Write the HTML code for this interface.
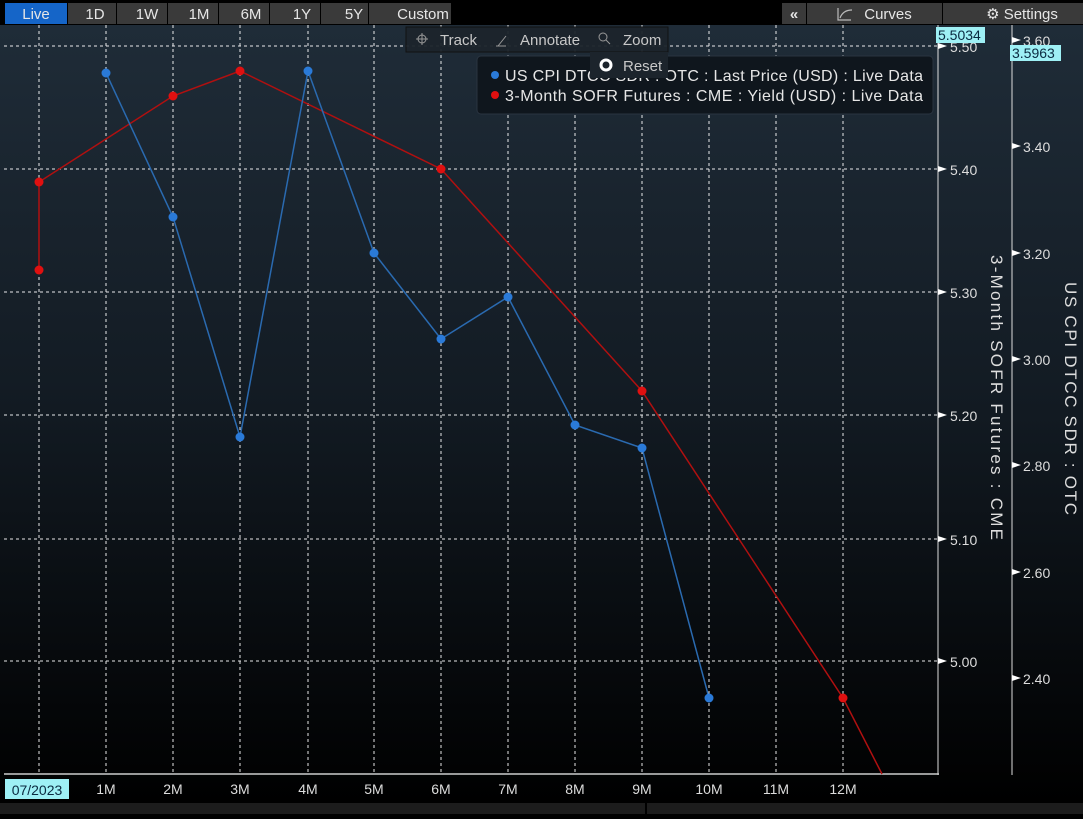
<!DOCTYPE html>
<html><head><meta charset="utf-8"><style>
body{margin:0;width:1083px;height:814px;overflow:hidden;background:#000;font-family:"Liberation Sans",sans-serif;}
svg text{font-family:"Liberation Sans",sans-serif;}
</style></head><body>
<svg width="1083" height="814" xmlns="http://www.w3.org/2000/svg">
<defs>
<linearGradient id="bg" x1="0" y1="0" x2="0" y2="1">
<stop offset="0" stop-color="#1f2c38"/><stop offset="0.5" stop-color="#121a22"/><stop offset="1" stop-color="#000"/>
</linearGradient>
</defs>
<rect x="0" y="0" width="1083" height="814" fill="#000"/>
<rect x="0" y="25" width="1083" height="778" fill="url(#bg)"/>
<rect x="0" y="0" width="1083" height="25" fill="#000"/>
<rect x="5" y="3" width="62" height="21" fill="#1565c8"/>
<g fill="#3a3a3a">
<rect x="68" y="3" width="48" height="21"/><rect x="117" y="3" width="50" height="21"/><rect x="168" y="3" width="50" height="21"/>
<rect x="219" y="3" width="50" height="21"/><rect x="270" y="3" width="50" height="21"/><rect x="321" y="3" width="47" height="21"/><rect x="369" y="3" width="82" height="21"/>
<rect x="782" y="3" width="24" height="21"/><rect x="807" y="3" width="135" height="21"/><rect x="943" y="3" width="140" height="21"/>
</g>
<g fill="#e6e6e6" font-size="15" text-anchor="middle">
<text x="36" y="19">Live</text><text x="95" y="19">1D</text><text x="147" y="19">1W</text><text x="199" y="19">1M</text>
<text x="251" y="19">6M</text><text x="302" y="19">1Y</text><text x="354" y="19">5Y</text><text x="423" y="19">Custom</text>
<text x="794" y="19" font-weight="bold">«</text><text x="888" y="19">Curves</text><text x="1022" y="19">⚙ Settings</text>
</g>
<path d="M838 8 v12 h13 M840 18 q3-8 12-8" stroke="#bbb" fill="none" stroke-width="1.2"/>
<g stroke="#fff" stroke-width="1" stroke-dasharray="3,3" opacity="0.9">
<line x1="39" y1="25" x2="39" y2="774"/><line x1="106" y1="25" x2="106" y2="774"/><line x1="173" y1="25" x2="173" y2="774"/>
<line x1="240" y1="25" x2="240" y2="774"/><line x1="308" y1="25" x2="308" y2="774"/><line x1="374" y1="25" x2="374" y2="774"/>
<line x1="441" y1="25" x2="441" y2="774"/><line x1="508" y1="25" x2="508" y2="774"/><line x1="575" y1="25" x2="575" y2="774"/>
<line x1="642" y1="25" x2="642" y2="774"/><line x1="709" y1="25" x2="709" y2="774"/><line x1="776" y1="25" x2="776" y2="774"/>
<line x1="843" y1="25" x2="843" y2="774"/>
<line x1="4" y1="46" x2="938" y2="46"/><line x1="4" y1="169" x2="938" y2="169"/><line x1="4" y1="292" x2="938" y2="292"/>
<line x1="4" y1="415" x2="938" y2="415"/><line x1="4" y1="539" x2="938" y2="539"/><line x1="4" y1="661" x2="938" y2="661"/>
</g>
<line x1="938" y1="25" x2="938" y2="775" stroke="#ddd"/>
<line x1="1012" y1="25" x2="1012" y2="775" stroke="#ddd"/>
<line x1="4" y1="774" x2="939" y2="774" stroke="#ccc" stroke-width="1.5"/>
<g fill="#fff">
<path d="M938 43 l9 3 l-9 3z"/><path d="M938 166 l9 3 l-9 3z"/><path d="M938 289 l9 3 l-9 3z"/><path d="M938 412 l9 3 l-9 3z"/><path d="M938 536 l9 3 l-9 3z"/><path d="M938 658 l9 3 l-9 3z"/>
<path d="M1012 37 l9 3 l-9 3z"/><path d="M1012 143 l9 3 l-9 3z"/><path d="M1012 250 l9 3 l-9 3z"/><path d="M1012 356 l9 3 l-9 3z"/><path d="M1012 462 l9 3 l-9 3z"/><path d="M1012 569 l9 3 l-9 3z"/><path d="M1012 675 l9 3 l-9 3z"/>
</g>
<g fill="#ddd" font-size="14">
<text x="950" y="52">5.50</text><text x="950" y="175">5.40</text><text x="950" y="298">5.30</text><text x="950" y="421">5.20</text><text x="950" y="545">5.10</text><text x="950" y="667">5.00</text>
<text x="1023" y="46">3.60</text><text x="1023" y="152">3.40</text><text x="1023" y="259">3.20</text><text x="1023" y="365">3.00</text><text x="1023" y="471">2.80</text><text x="1023" y="578">2.60</text><text x="1023" y="684">2.40</text>
</g>
<rect x="936" y="27" width="49" height="16" fill="#9ef0f5"/><text x="938" y="40" font-size="14" fill="#0a2a40">5.5034</text>
<rect x="1010" y="45" width="51" height="16" fill="#9ef0f5"/><text x="1012" y="58" font-size="14" fill="#0a2a40">3.5963</text>
<text transform="translate(991,255) rotate(90)" font-size="17" fill="#ddd" textLength="285" lengthAdjust="spacing">3-Month SOFR Futures : CME</text>
<text transform="translate(1065,282) rotate(90)" font-size="17" fill="#ddd" textLength="233" lengthAdjust="spacing">US CPI DTCC SDR : OTC</text>
<rect x="5" y="779" width="64" height="20" fill="#9ef0f5"/>
<g fill="#ddd" font-size="14" text-anchor="middle">
<text x="37" y="795" fill="#0a2a40">07/2023</text>
<text x="106" y="794">1M</text><text x="173" y="794">2M</text><text x="240" y="794">3M</text><text x="308" y="794">4M</text><text x="374" y="794">5M</text>
<text x="441" y="794">6M</text><text x="508" y="794">7M</text><text x="575" y="794">8M</text><text x="642" y="794">9M</text><text x="709" y="794">10M</text>
<text x="776" y="794">11M</text><text x="843" y="794">12M</text>
</g>
<rect x="0" y="803" width="1083" height="11" fill="#1c1c1c"/><line x1="646" y1="803" x2="646" y2="814" stroke="#000" stroke-width="2"/>
<polyline points="39,270 39,182 173,96 240,71 441,169 642,391 843,698 882,774" fill="none" stroke="#b01010" stroke-width="1.5"/>
<polyline points="106,73 173,217 240,437 308,71 374,253 441,339 508,297 575,425 642,448 709,698" fill="none" stroke="#2a6ab0" stroke-width="1.5"/>
<g fill="#e01010"><circle cx="39" cy="270" r="4.5"/><circle cx="39" cy="182" r="4.5"/><circle cx="173" cy="96" r="4.5"/><circle cx="240" cy="71" r="4.5"/><circle cx="441" cy="169" r="4.5"/><circle cx="642" cy="391" r="4.5"/><circle cx="843" cy="698" r="4.5"/></g>
<g fill="#2a7ad8"><circle cx="106" cy="73" r="4.5"/><circle cx="173" cy="217" r="4.5"/><circle cx="240" cy="437" r="4.5"/><circle cx="308" cy="71" r="4.5"/><circle cx="374" cy="253" r="4.5"/><circle cx="441" cy="339" r="4.5"/><circle cx="508" cy="297" r="4.5"/><circle cx="575" cy="425" r="4.5"/><circle cx="642" cy="448" r="4.5"/><circle cx="709" cy="698" r="4.5"/></g>
<rect x="477" y="56" width="456" height="58" rx="4" fill="#0f161d" stroke="#2a3440"/>
<circle cx="495" cy="75" r="4" fill="#2a7ad8"/><circle cx="495" cy="95" r="4" fill="#e01010"/>
<g fill="#e6e6e6" font-size="16"><text x="505" y="81" textLength="418" lengthAdjust="spacing">US CPI DTCC SDR : OTC : Last Price (USD) : Live Data</text>
<text x="505" y="101" textLength="418" lengthAdjust="spacing">3-Month SOFR Futures : CME : Yield (USD) : Live Data</text></g>
<rect x="406" y="27" width="262" height="25" fill="#1c242c" stroke="#111" opacity="0.95"/>
<rect x="590" y="52" width="78" height="26" fill="#1c242c"/>
<g fill="#c8c8c8" font-size="15"><text x="440" y="45">Track</text><text x="520" y="45">Annotate</text><text x="623" y="45">Zoom</text><text x="623" y="71">Reset</text></g>
<circle cx="606" cy="65" r="5" fill="none" stroke="#fff" stroke-width="3"/>
<path d="M416 39 h12 M422 33 v12" stroke="#999"/><circle cx="422" cy="39" r="4" fill="none" stroke="#999"/>
<path d="M498 46 l8-10 M496 46 h10" stroke="#999"/>
<circle cx="603" cy="37" r="4" fill="none" stroke="#999"/><path d="M606 40 l4 4" stroke="#999"/>
</svg>
</body></html>
